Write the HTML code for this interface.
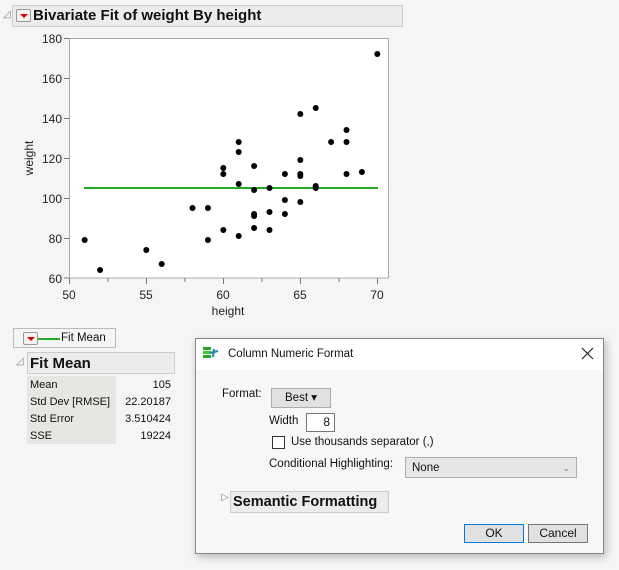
<!DOCTYPE html>
<html><head><style>
body{margin:0;width:619px;height:570px;background:#f5f5f5;font-family:"Liberation Sans",sans-serif;position:relative;overflow:hidden;color:#111}
.abs{position:absolute}
.menu{position:absolute;width:13px;height:11px;border:1px solid #999;background:#f3f3f3;border-radius:2px}
.menu:after{content:"";position:absolute;left:3px;top:4px;border-left:4px solid transparent;border-right:4px solid transparent;border-top:4px solid #d00}
.hdr{position:absolute;background:#ececec;border:1px solid #ccc;font-weight:bold}
td{padding:0}
.btn{position:absolute;background:#e1e1e1;border:1px solid #adadad;font-size:12px;text-align:center}
</style></head><body>
<div class="abs" style="left:3px;top:9px;font-size:10px;color:#888">◿</div>
<div class="hdr" style="left:12px;top:5px;width:389px;height:20px"></div>
<div class="menu" style="left:16px;top:9px"></div>
<div class="abs" style="left:33px;top:7px;font-size:15px;font-weight:bold">Bivariate Fit of weight By height</div>

<svg class="abs" style="left:0;top:0" width="400" height="320">
<rect x="69.5" y="38.5" width="319" height="239.5" fill="#fff" stroke="#aaa"/>
<g stroke="#777" stroke-width="1">
<line x1="64" y1="38.5" x2="69" y2="38.5"/><line x1="64" y1="78.5" x2="69" y2="78.5"/><line x1="64" y1="118.5" x2="69" y2="118.5"/><line x1="64" y1="158.5" x2="69" y2="158.5"/><line x1="64" y1="198.5" x2="69" y2="198.5"/><line x1="64" y1="238.5" x2="69" y2="238.5"/><line x1="64" y1="278" x2="69" y2="278"/>
<line x1="69.5" y1="278" x2="69.5" y2="284"/><line x1="146.5" y1="278" x2="146.5" y2="284"/><line x1="223.5" y1="278" x2="223.5" y2="284"/><line x1="300.5" y1="278" x2="300.5" y2="284"/><line x1="377.5" y1="278" x2="377.5" y2="284"/>
<line x1="108" y1="278" x2="108" y2="282"/><line x1="185" y1="278" x2="185" y2="282"/><line x1="262" y1="278" x2="262" y2="282"/><line x1="339" y1="278" x2="339" y2="282"/>
</g>
<g font-size="12" fill="#222" text-anchor="end">
<text x="62" y="43">180</text><text x="62" y="83">160</text><text x="62" y="123">140</text><text x="62" y="163">120</text><text x="62" y="203">100</text><text x="62" y="243">80</text><text x="62" y="283">60</text>
</g>
<g font-size="12" fill="#222" text-anchor="middle">
<text x="69" y="299">50</text><text x="146" y="299">55</text><text x="223" y="299">60</text><text x="300" y="299">65</text><text x="377" y="299">70</text>
<text x="228" y="315">height</text>
<text transform="translate(33,158) rotate(-90)">weight</text>
</g>
<line x1="84" y1="188" x2="378" y2="188" stroke="#22aa22" stroke-width="2"/>
<g fill="#000">
<circle cx="84.7" cy="240" r="3"/><circle cx="100.1" cy="270" r="3"/><circle cx="146.3" cy="250" r="3"/><circle cx="161.7" cy="264" r="3"/>
<circle cx="192.5" cy="208" r="3"/><circle cx="207.9" cy="208" r="3"/><circle cx="207.9" cy="240" r="3"/>
<circle cx="223.3" cy="168" r="3"/><circle cx="223.3" cy="174" r="3"/><circle cx="223.3" cy="230" r="3"/>
<circle cx="238.7" cy="142" r="3"/><circle cx="238.7" cy="152" r="3"/><circle cx="238.7" cy="184" r="3"/><circle cx="238.7" cy="236" r="3"/>
<circle cx="254.1" cy="166" r="3"/><circle cx="254.1" cy="190" r="3"/><circle cx="254.1" cy="214" r="3"/><circle cx="254.1" cy="216" r="3"/><circle cx="254.1" cy="228" r="3"/>
<circle cx="269.5" cy="188" r="3"/><circle cx="269.5" cy="212" r="3"/><circle cx="269.5" cy="230" r="3"/>
<circle cx="284.9" cy="174" r="3"/><circle cx="284.9" cy="200" r="3"/><circle cx="284.9" cy="214" r="3"/>
<circle cx="300.3" cy="114" r="3"/><circle cx="300.3" cy="160" r="3"/><circle cx="300.3" cy="174" r="3"/><circle cx="300.3" cy="176" r="3"/><circle cx="300.3" cy="202" r="3"/>
<circle cx="315.7" cy="108" r="3"/><circle cx="315.7" cy="186" r="3"/><circle cx="315.7" cy="188" r="3"/>
<circle cx="331.1" cy="142" r="3"/><circle cx="346.5" cy="130" r="3"/><circle cx="346.5" cy="142" r="3"/><circle cx="346.5" cy="174" r="3"/>
<circle cx="361.9" cy="172" r="3"/><circle cx="377.3" cy="54" r="3"/>
</g>
</svg>

<div class="abs" style="left:13px;top:328px;width:101px;height:18px;border:1px solid #bbb;background:#f5f5f5"></div>
<div class="menu" style="left:23px;top:332px"></div>
<div class="abs" style="left:38px;top:338px;width:22px;height:2px;background:#22aa22"></div>
<div class="abs" style="left:61px;top:332px;font-size:11.5px">Fit Mean</div>
<div class="abs" style="left:16px;top:356px;font-size:10px;color:#888">◿</div>
<div class="hdr" style="left:27px;top:352px;width:146px;height:20px"></div>
<div class="abs" style="left:30px;top:355px;font-size:15px;font-weight:bold">Fit Mean</div>
<div class="abs" style="left:27px;top:376px;width:89px;height:68px;background:#e6e6e2"></div>
<table class="abs" style="left:30px;top:377px;font-size:11px;border-collapse:collapse;line-height:17px">
<tr><td style="width:88px">Mean</td><td style="text-align:right;width:53px">105</td></tr>
<tr><td>Std Dev [RMSE]</td><td style="text-align:right">22.20187</td></tr>
<tr><td>Std Error</td><td style="text-align:right">3.510424</td></tr>
<tr><td>SSE</td><td style="text-align:right">19224</td></tr>
</table>

<div class="abs" style="left:195px;top:338px;width:407px;height:214px;background:#f7f7f7;border:1px solid #888;box-shadow:2px 3px 8px rgba(0,0,0,.25)"></div>
<div class="abs" style="left:196px;top:339px;width:407px;height:31px;background:#fff"></div>
<svg class="abs" style="left:203px;top:346px" width="16" height="14"><rect x="0" y="1" width="8" height="3" fill="#2a2"/><rect x="0" y="5" width="8" height="3" fill="#3c3"/><rect x="0" y="9" width="8" height="3" fill="#2a2"/><path d="M7 7 L15 5 M11 3 L10 11" stroke="#28a" stroke-width="2"/></svg>
<div class="abs" style="left:228px;top:348px;font-size:11.5px">Column Numeric Format</div>
<svg class="abs" style="left:581px;top:347px" width="13" height="13"><path d="M1 1L12 12M12 1L1 12" stroke="#222" stroke-width="1.2"/></svg>
<div class="abs" style="left:222px;top:388px;font-size:11.5px">Format:</div>
<div class="btn" style="left:271px;top:388px;width:58px;height:18px;line-height:18px;font-size:11.5px">Best ▾</div>
<div class="abs" style="left:269px;top:415px;font-size:11.5px">Width</div>
<div class="abs" style="left:306px;top:413px;width:29px;background:#fff;border:1px solid #777;font-size:12px;text-align:right;line-height:17px;box-sizing:border-box;padding-right:4px;height:19px">8</div>
<div class="abs" style="left:272px;top:436px;width:11px;height:11px;background:#fff;border:1px solid #333"></div>
<div class="abs" style="left:291px;top:436px;font-size:11.5px">Use thousands separator (,)</div>
<div class="abs" style="left:269px;top:458px;font-size:11.5px">Conditional Highlighting:</div>
<div class="abs" style="left:405px;top:457px;width:172px;background:#e6e6e6;border:1px solid #adadad;font-size:11.5px;line-height:20px;padding-left:6px;box-sizing:border-box;height:21px">None<span style="position:absolute;right:6px;font-size:9px;color:#777">⌄</span></div>
<div class="abs" style="left:221px;top:492px;font-size:10px;color:#888">▷</div>
<div class="hdr" style="left:230px;top:491px;width:157px;height:20px"></div>
<div class="abs" style="left:233px;top:494px;font-size:14.5px;font-weight:bold">Semantic Formatting</div>
<div class="btn" style="left:464px;top:524px;width:58px;height:17px;line-height:17px;border-color:#0078d7">OK</div>
<div class="btn" style="left:528px;top:524px;width:58px;height:17px;line-height:17px;border-color:#777">Cancel</div>
</body></html>
